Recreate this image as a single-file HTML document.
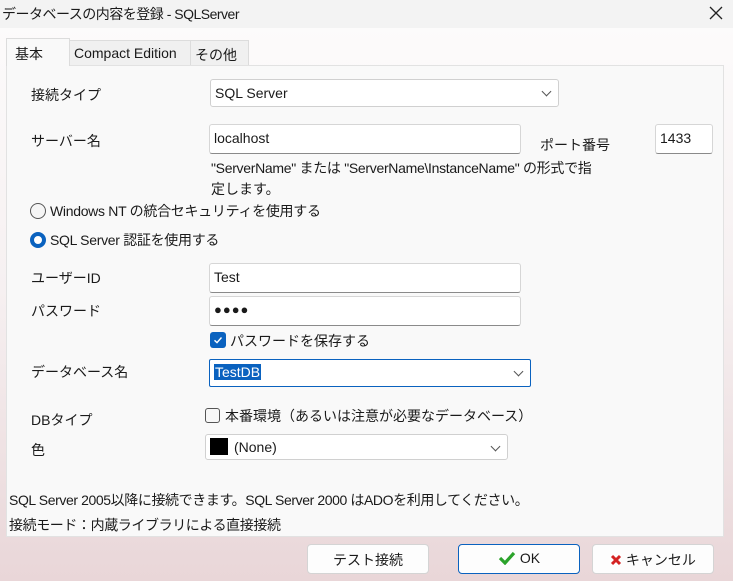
<!DOCTYPE html>
<html><head><meta charset="utf-8"><style>
*{box-sizing:border-box;margin:0;padding:0}
body{width:733px;height:581px;overflow:hidden;position:relative;font-family:"Liberation Sans","Noto Sans CJK JP",sans-serif;font-size:14px;color:#1a1a1a;background:linear-gradient(180deg,#fdfcfc 0%,#f6f0f1 50%,#e9d6d8 100%)}
.a{position:absolute;white-space:nowrap}
.title{left:0;top:0;width:733px;height:28px;background:#f3f3f3}
.panel{left:6px;top:65px;width:718px;height:472px;background:#f9f9f9;border:1px solid #e2e2e2}
.tab{border:1px solid #dcdcdc;border-bottom:none;background:#f0f0f0;height:25px;top:40px;padding:3px 4px;font-size:14px}
.inp{background:#fff;border:1px solid #d6d6d6;border-bottom:1px solid #8a8a8a;border-radius:3px;height:30px;padding:5px 4px;font-size:14px}
.sel{background:#fff;border:1px solid #d0d0d0;border-radius:3px;height:28px;padding:4px 4px}
.chev{position:absolute;right:8px;top:8px;width:7px;height:7px;border-right:1px solid #555;border-bottom:1px solid #555;transform:rotate(45deg)}
.btn{background:#fdfdfd;border:1px solid #d4d4d4;border-radius:4px;height:30px;top:544px;text-align:center;padding-top:5px}
.lbl{font-size:14px}
.n{letter-spacing:-0.3px}
</style></head><body>
<div class="a title"></div>
<div class="a" style="left:2px;top:4px;font-size:14px;letter-spacing:-0.5px">データベースの内容を登録 - SQLServer</div>
<svg class="a" style="left:709px;top:6px" width="14" height="14"><path d="M1 1L13 13M13 1L1 13" stroke="#222" stroke-width="1.3"/></svg>
<div class="a panel"></div>
<div class="a tab" style="left:69px;width:122px;padding-top:4px">Compact Edition</div>
<div class="a tab" style="left:190px;width:59px;padding-top:4px">その他</div>
<div class="a" style="left:6px;top:38px;width:64px;height:28px;background:#f9f9f9;border:1px solid #dcdcdc;border-bottom:none;padding:5px 8px">基本</div>

<div class="a lbl" style="left:31px;top:85px">接続タイプ</div>
<div class="a sel" style="left:210px;top:79px;width:349px;padding-top:5px">SQL Server<span class="chev"></span></div>

<div class="a lbl" style="left:31px;top:131px">サーバー名</div>
<div class="a inp" style="left:209px;top:124px;width:312px">localhost</div>
<div class="a lbl" style="left:540px;top:135px">ポート番号</div>
<div class="a inp" style="left:655px;top:124px;width:58px">1433</div>
<div class="a n" style="left:211px;top:158px">"ServerName" または "ServerName\InstanceName" の形式で指</div>
<div class="a" style="left:211px;top:179px">定します。</div>

<div class="a" style="left:30px;top:203px;width:16px;height:16px;border:1px solid #555;border-radius:50%;background:#f5f5f5"></div>
<div class="a n" style="left:50px;top:201px">Windows NT の統合セキュリティを使用する</div>
<div class="a" style="left:30px;top:232px;width:16px;height:16px;border-radius:50%;background:#fff;border:4.5px solid #0a62bf"></div>
<div class="a n" style="left:50px;top:230px">SQL Server 認証を使用する</div>

<div class="a lbl" style="left:31px;top:268px">ユーザーID</div>
<div class="a inp" style="left:209px;top:263px;width:312px">Test</div>
<div class="a lbl" style="left:31px;top:301px">パスワード</div>
<div class="a inp" style="left:209px;top:296px;width:312px;font-size:13px;letter-spacing:1px">●●●●</div>

<div class="a" style="left:210px;top:332px;width:16px;height:16px;border-radius:3px;background:#0a62bf"></div>
<svg class="a" style="left:210px;top:332px" width="16" height="16"><path d="M4.5 8.3L7 10.6L11.5 5.5" fill="none" stroke="#fff" stroke-width="1.4"/></svg>
<div class="a" style="left:230px;top:331px">パスワードを保存する</div>

<div class="a lbl" style="left:31px;top:362px">データベース名</div>
<div class="a" style="left:209px;top:359px;width:322px;height:28px;background:#fff;border:1px solid #0a62bf;border-radius:2px"><span style="position:absolute;left:4px;top:4px;background:#0a62bf;color:#fff;padding:0 1px">TestDB</span><span class="chev"></span></div>

<div class="a lbl" style="left:31px;top:410px">DBタイプ</div>
<div class="a" style="left:205px;top:408px;width:15px;height:15px;border:1px solid #555;border-radius:3px;background:#f7f7f7"></div>
<div class="a" style="left:225px;top:406px">本番環境（あるいは注意が必要なデータベース）</div>
<div class="a lbl" style="left:31px;top:440px">色</div>
<div class="a sel" style="left:205px;top:434px;width:303px;height:26px;padding:3px 4px"><span style="display:inline-block;width:18px;height:17px;background:#000;vertical-align:-3px;margin-right:6px"></span>(None)<span class="chev"></span></div>

<div class="a" style="left:9px;top:490px;letter-spacing:-0.4px">SQL Server 2005以降に接続できます。SQL Server 2000 はADOを利用してください。</div>
<div class="a" style="left:9px;top:515px;letter-spacing:-0.4px">接続モード：内蔵ライブラリによる直接接続</div>

<div class="a btn" style="left:307px;width:122px">テスト接続</div>
<div class="a btn" style="left:458px;width:122px;border-color:#0a62bf"><svg width="18" height="14" style="vertical-align:-2px"><path d="M2 7L7 12L16 2" fill="none" stroke="#2ba32b" stroke-width="3.2"/></svg> OK</div>
<div class="a btn" style="left:592px;width:122px"><svg width="12" height="12" style="vertical-align:-1px"><path d="M2 2L10 10M10 2L2 10" stroke="#d42222" stroke-width="3"/></svg> キャンセル</div>
</body></html>
